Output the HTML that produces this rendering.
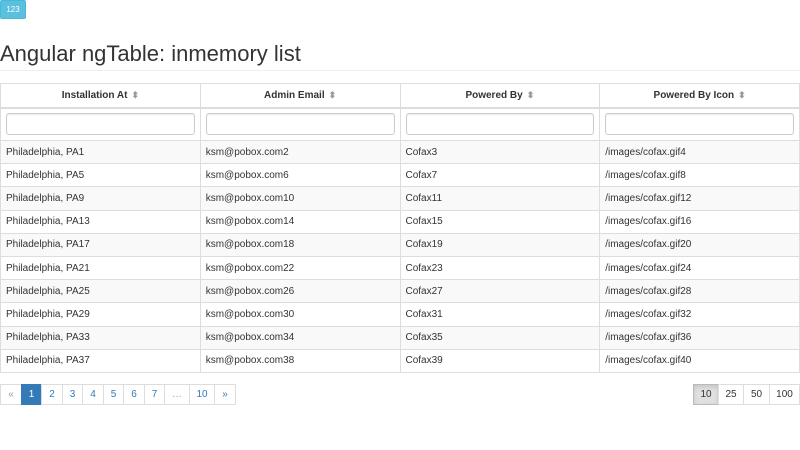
<!DOCTYPE html>
<html><head><style>
*{box-sizing:border-box}
body{margin:0;width:800px;height:450px;font-family:"Liberation Sans",sans-serif;font-size:10px;color:#333;background:#fff;position:relative;overflow:hidden}
.btn{position:absolute;left:0;top:0;width:26px;height:19px;background:#5bc0de;border:1px solid #46b8da;border-radius:2px;color:#fff;font-size:8px;text-align:center;line-height:17px}
h1{position:absolute;left:0;top:41px;margin:0;font-size:22px;font-weight:400;line-height:26px}
.hr{position:absolute;left:0;top:70px;width:800px;border-top:1px solid #eee}
table{position:absolute;left:0;top:83px;width:800px;border-collapse:collapse}
td,th{border:1px solid #ddd;padding:0 5px;text-align:left;height:23.2px;width:200px}
th{text-align:center;font-weight:bold;height:24px;border-bottom:2px solid #ddd}
.f td{height:33px}
.f div{height:22px;border:1px solid #ccc;border-radius:3px;box-shadow:inset 0 1px 1px rgba(0,0,0,.075)}
tr.o td{background:#f9f9f9}
.s{color:#999;font-size:9px;margin-left:4px}
.pg{position:absolute;top:384px;height:21px;display:flex}
.pg span{border:1px solid #ddd;margin-left:-1px;height:21px;line-height:19px;text-align:center;color:#337ab7}
.pg span.a{background:#337ab7;border-color:#337ab7;color:#fff}
.r span{color:#333}
.r span.a{background:#e0e0e0;border-color:#bbb;color:#333;box-shadow:inset 0 2px 4px rgba(0,0,0,.12)}
</style></head><body>
<div class="btn">123</div>
<h1>Angular ngTable: inmemory list</h1>
<div class="hr"></div>
<table>
<tr><th>Installation At<span class="s">⬍</span></th><th>Admin Email<span class="s">⬍</span></th><th>Powered By<span class="s">⬍</span></th><th>Powered By Icon<span class="s">⬍</span></th></tr>
<tr class="f"><td><div></div></td><td><div></div></td><td><div></div></td><td><div></div></td></tr>
<tr class="o"><td>Philadelphia, PA1</td><td>ksm@pobox.com2</td><td>Cofax3</td><td>/images/cofax.gif4</td></tr>
<tr><td>Philadelphia, PA5</td><td>ksm@pobox.com6</td><td>Cofax7</td><td>/images/cofax.gif8</td></tr>
<tr class="o"><td>Philadelphia, PA9</td><td>ksm@pobox.com10</td><td>Cofax11</td><td>/images/cofax.gif12</td></tr>
<tr><td>Philadelphia, PA13</td><td>ksm@pobox.com14</td><td>Cofax15</td><td>/images/cofax.gif16</td></tr>
<tr class="o"><td>Philadelphia, PA17</td><td>ksm@pobox.com18</td><td>Cofax19</td><td>/images/cofax.gif20</td></tr>
<tr><td>Philadelphia, PA21</td><td>ksm@pobox.com22</td><td>Cofax23</td><td>/images/cofax.gif24</td></tr>
<tr class="o"><td>Philadelphia, PA25</td><td>ksm@pobox.com26</td><td>Cofax27</td><td>/images/cofax.gif28</td></tr>
<tr><td>Philadelphia, PA29</td><td>ksm@pobox.com30</td><td>Cofax31</td><td>/images/cofax.gif32</td></tr>
<tr class="o"><td>Philadelphia, PA33</td><td>ksm@pobox.com34</td><td>Cofax35</td><td>/images/cofax.gif36</td></tr>
<tr><td>Philadelphia, PA37</td><td>ksm@pobox.com38</td><td>Cofax39</td><td>/images/cofax.gif40</td></tr>
</table>
<div class="pg" style="left:1px">
<span style="width:22px;color:#999">«</span><span class="a" style="width:21px">1</span><span style="width:22px">2</span><span style="width:21px">3</span><span style="width:22px">4</span><span style="width:21px">5</span><span style="width:22px">6</span><span style="width:21px">7</span><span style="width:26px;color:#999">…</span><span style="width:26px">10</span><span style="width:22px">»</span>
</div>
<div class="pg r" style="left:694px">
<span class="a" style="width:26px">10</span><span style="width:26px">25</span><span style="width:27px">50</span><span style="width:31px">100</span>
</div>
</body></html>
